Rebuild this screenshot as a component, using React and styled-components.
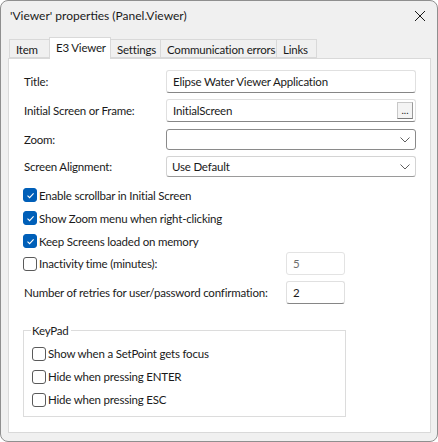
import styled, { createGlobalStyle } from 'styled-components';

const GlobalStyle = createGlobalStyle`
  html, body {
    margin: 0;
    padding: 0;
    background: #ffffff;
  }
  body {
    font-family: Lato, 'Noto Sans', sans-serif;
    font-size: 11.5px;
    letter-spacing: -0.2px;
    color: #1a1a1a;
  }
`;

const Window = styled.div`
  box-sizing: border-box;
  width: 438px;
  height: 442px;
  background: #f0f0f0;
  border: 1px solid #8f8f8f;
  border-radius: 8px;
  display: flex;
  flex-direction: column;
  overflow: hidden;
`;

const TitleBar = styled.div`
  height: 29px;
  display: flex;
  align-items: center;
  justify-content: space-between;
  padding: 0 9px 0 9px;
  font-size: 12px;
  letter-spacing: 0;
`;

const CloseButton = styled.div`
  width: 14px;
  height: 14px;
  display: flex;
  align-items: center;
  justify-content: center;
  margin-right: 1px;
`;

const TabStrip = styled.div`
  display: flex;
  align-items: flex-end;
  height: 28px;
  padding-left: 8px;
  position: relative;
  z-index: 1;
`;

const Tab = styled.div`
  box-sizing: border-box;
  width: ${(p) => p.$w}px;
  height: ${(p) => (p.$active ? 22 : 19)}px;
  margin-left: -1px;
  margin-bottom: ${(p) => (p.$active ? -1 : 0)}px;
  border: 1px solid #d9d9d9;
  border-bottom: ${(p) => (p.$active ? 'none' : '1px solid #d9d9d9')};
  background: ${(p) => (p.$active ? '#ffffff' : '#f0f0f0')};
  padding: ${(p) => (p.$active ? '0 0 3px 6px' : '1px 0 0 6px')};
  display: flex;
  align-items: center;
  white-space: nowrap;
  position: relative;
  z-index: ${(p) => (p.$active ? 2 : 1)};
  &:first-child {
    margin-left: 0;
  }
`;

const Panel = styled.div`
  box-sizing: border-box;
  margin: 0 6px 8px 7px;
  flex: 1;
  background: #ffffff;
  border: 1px solid #d9d9d9;
  padding: 11px 13px 0 14px;
  display: flex;
  flex-direction: column;
`;

const FieldRow = styled.div`
  display: grid;
  grid-template-columns: 143px 250px;
  align-items: center;
  height: ${(p) => p.$h}px;
  margin-bottom: ${(p) => p.$gap}px;
`;

const Label = styled.div`
  padding-left: 1px;
  white-space: nowrap;
`;

const TextBox = styled.div`
  box-sizing: border-box;
  height: ${(p) => p.$h || 23}px;
  width: ${(p) => (p.$w ? `${p.$w}px` : '100%')};
  border: 1px solid ${(p) => (p.$disabled ? '#e3e3e3' : '#e0e0e0')};
  border-bottom-color: ${(p) => (p.$disabled ? '#e3e3e3' : '#868686')};
  border-radius: 3px;
  background: #ffffff;
  display: flex;
  align-items: center;
  justify-content: space-between;
  padding: 0 2px 0 6px;
  color: ${(p) => (p.$disabled ? '#6f6f6f' : '#1a1a1a')};
`;

const Combo = styled.div`
  box-sizing: border-box;
  height: 21px;
  border: 1px solid ${(p) => (p.$editable ? '#8a8a8a' : '#d4d4d4')};
  border-bottom-color: ${(p) => (p.$editable ? '#8a8a8a' : '#9a9a9a')};
  border-radius: 3px;
  background: #ffffff;
  display: flex;
  align-items: center;
  justify-content: space-between;
  padding: 0 5px 0 5px;
`;

const EllipsisButton = styled.div`
  box-sizing: border-box;
  width: 16px;
  height: 17px;
  border: 1px solid #c8c8c8;
  border-bottom-color: #7a7a7a;
  border-right-color: #9a9a9a;
  background: #f4f4f4;
  font-size: 10px;
  line-height: 10px;
  letter-spacing: 0;
  display: flex;
  justify-content: center;
  align-items: flex-end;
  padding-bottom: 3px;
`;

const CheckRow = styled.label`
  display: flex;
  align-items: center;
  height: ${(p) => p.$h || 22}px;
  margin-bottom: ${(p) => p.$gap || 0}px;
  white-space: nowrap;
`;

const Box = styled.span`
  box-sizing: border-box;
  width: 14px;
  height: 14px;
  border-radius: 3px;
  margin-right: 2px;
  flex-shrink: 0;
  background: ${(p) => (p.$checked ? '#005fb8' : '#ffffff')};
  border: 1px solid ${(p) => (p.$checked ? '#005fb8' : '#5a5a5a')};
  display: flex;
  align-items: center;
  justify-content: center;
`;

const SplitRow = styled.div`
  display: flex;
  align-items: center;
  justify-content: space-between;
  width: 322px;
  height: ${(p) => p.$h}px;
  margin-bottom: ${(p) => p.$gap || 0}px;
`;

const Group = styled.fieldset`
  box-sizing: border-box;
  width: 323px;
  height: 93px;
  margin: 0;
  padding: 5px 0 0 8px;
  border: 1px solid #dcdcdc;
  display: flex;
  flex-direction: column;
`;

const Legend = styled.legend`
  padding: 0 2px 0 1px;
  margin-left: -1px;
`;

function Check({ checked, children, h, gap }) {
  return (
    <CheckRow $h={h} $gap={gap}>
      <Box $checked={checked}>
        {checked && (
          <svg width="9" height="9" viewBox="0 0 9 9">
            <path d="M1.5 4.6 L3.6 6.6 L7.6 2.4" fill="none" stroke="#ffffff" strokeWidth="1.1" />
          </svg>
        )}
      </Box>
      {children}
    </CheckRow>
  );
}

function Chevron() {
  return (
    <svg width="10" height="6" viewBox="0 0 10 6">
      <path d="M0.5 0.5 L5 5 L9.5 0.5" fill="none" stroke="#5f5f5f" strokeWidth="1" />
    </svg>
  );
}

const tabs = [
  { name: 'Item', w: 41 },
  { name: 'E3 Viewer', w: 62, active: true },
  { name: 'Settings', w: 51 },
  { name: 'Communication errors', w: 117 },
  { name: 'Links', w: 41 },
];

export default function App() {
  return (
    <>
      <GlobalStyle />
      <Window>
        <TitleBar>
          <span>'Viewer' properties (Panel.Viewer)</span>
          <CloseButton>
            <svg width="12" height="12" viewBox="0 0 12 12">
              <path d="M1 1 L11 11 M11 1 L1 11" stroke="#1a1a1a" strokeWidth="1" />
            </svg>
          </CloseButton>
        </TitleBar>
        <TabStrip>
          {tabs.map((t) => (
            <Tab key={t.name} $w={t.w} $active={t.active}>
              {t.name}
            </Tab>
          ))}
        </TabStrip>
        <Panel>
          <FieldRow $h={23} $gap={6}>
            <Label>Title:</Label>
            <TextBox>Elipse Water Viewer Application</TextBox>
          </FieldRow>
          <FieldRow $h={23} $gap={7}>
            <Label>Initial Screen or Frame:</Label>
            <TextBox>
              InitialScreen
              <EllipsisButton>...</EllipsisButton>
            </TextBox>
          </FieldRow>
          <FieldRow $h={21} $gap={6}>
            <Label>Zoom:</Label>
            <Combo $editable>
              <span />
              <Chevron />
            </Combo>
          </FieldRow>
          <FieldRow $h={21} $gap={7}>
            <Label>Screen Alignment:</Label>
            <Combo>
              <span>Use Default</span>
              <Chevron />
            </Combo>
          </FieldRow>
          <Check checked h={22} gap={1}>Enable scrollbar in Initial Screen</Check>
          <Check checked h={22} gap={1}>Show Zoom menu when right-clicking</Check>
          <Check checked h={22} gap={0}>Keep Screens loaded on memory</Check>
          <SplitRow $h={23} $gap={6}>
            <Check h={23}>Inactivity time (minutes):</Check>
            <TextBox $w={59} $disabled>5</TextBox>
          </SplitRow>
          <SplitRow $h={23} $gap={20}>
            <Label>Number of retries for user/password confirmation:</Label>
            <TextBox $w={59}>2</TextBox>
          </SplitRow>
          <Group>
            <Legend>KeyPad</Legend>
            <Check h={23}>Show when a SetPoint gets focus</Check>
            <Check h={23}>Hide when pressing ENTER</Check>
            <Check h={23}>Hide when pressing ESC</Check>
          </Group>
        </Panel>
      </Window>
    </>
  );
}
